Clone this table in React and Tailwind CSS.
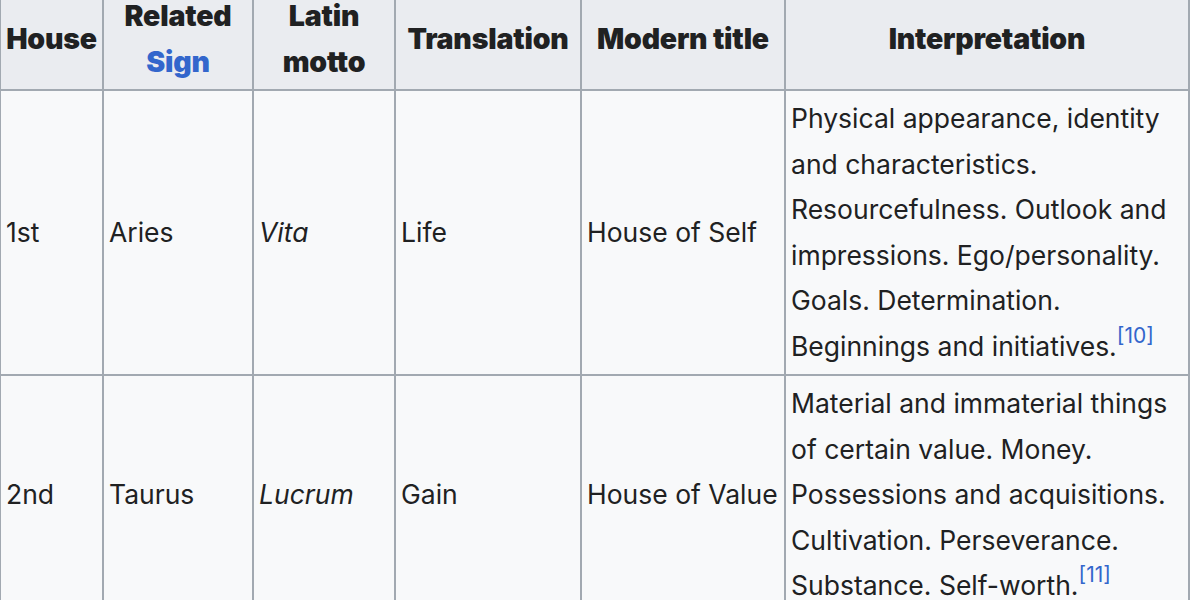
import React from "react";

const font = { fontFamily: "Inter, 'Noto Sans', 'Liberation Sans', sans-serif" };

function Sup({ n }) {
  return (
    <sup className="text-[21px] text-[#3366cc] relative -top-[3px] leading-none align-super font-normal">[{n}]</sup>
  );
}

function Lines({ lines }) {
  return (
    <div>
      {lines.map((l, i) => (
        <div key={i} className="whitespace-nowrap">{l}</div>
      ))}
    </div>
  );
}

export default function App() {
  const th = "border-2 border-[#a2a9b1] bg-[#eaecf0] px-[2px] py-[5px] text-center font-black text-[28.5px] tracking-[-0.2px] align-middle whitespace-nowrap";
  const td = "border-2 border-[#a2a9b1] bg-[#f8f9fa] px-[5px] py-[5px] align-middle";
  return (
    <div className="w-[1200px] h-[600px] overflow-hidden bg-white" style={font}>
      <div className="-mt-[14px] -ml-[1px]">
        <table className="border-collapse table-fixed text-[#202122] text-[26.5px] leading-[45.5px]">
          <colgroup>
            <col className="w-[103px]" />
            <col className="w-[150px]" />
            <col className="w-[142px]" />
            <col className="w-[186px]" />
            <col className="w-[204px]" />
            <col className="w-[404px]" />
          </colgroup>
          <thead>
            <tr>
              <th className={th}>House</th>
              <th className={th}>
                Related
                <br />
                <span className="text-[#3366cc]">Sign</span>
              </th>
              <th className={th}>
                Latin
                <br />
                motto
              </th>
              <th className={th}>Translation</th>
              <th className={th}>Modern title</th>
              <th className={th}>Interpretation</th>
            </tr>
          </thead>
          <tbody>
            <tr>
              <td className={td}>1st</td>
              <td className={td}>Aries</td>
              <td className={td}><i>Vita</i></td>
              <td className={td}>Life</td>
              <td className={td + " whitespace-nowrap"}>House of Self</td>
              <td className={td}>
                <Lines
                  lines={[
                    "Physical appearance, identity",
                    "and characteristics.",
                    "Resourcefulness. Outlook and",
                    "impressions. Ego/personality.",
                    "Goals. Determination.",
                    <>Beginnings and initiatives.<Sup n={10} /></>,
                  ]}
                />
              </td>
            </tr>
            <tr>
              <td className={td}>2nd</td>
              <td className={td}>Taurus</td>
              <td className={td}><i>Lucrum</i></td>
              <td className={td}>Gain</td>
              <td className={td + " whitespace-nowrap"}>House of Value</td>
              <td className={td}>
                <Lines
                  lines={[
                    "Material and immaterial things",
                    "of certain value. Money.",
                    "Possessions and acquisitions.",
                    "Cultivation. Perseverance.",
                    <>Substance. Self-worth.<Sup n={11} /></>,
                  ]}
                />
              </td>
            </tr>
          </tbody>
        </table>
      </div>
    </div>
  );
}
